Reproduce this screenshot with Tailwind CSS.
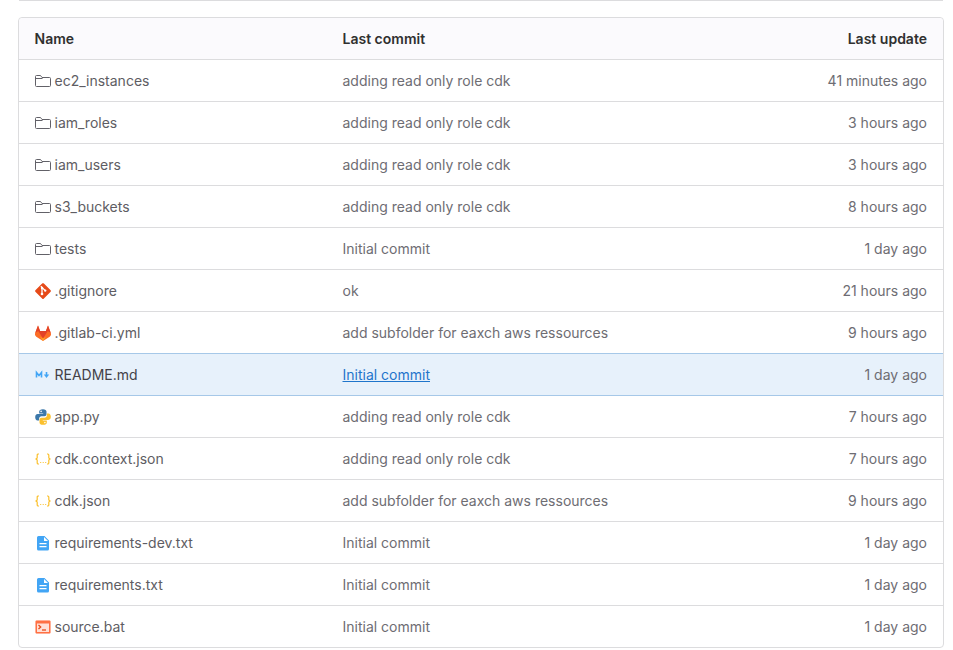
<!DOCTYPE html>
<html lang="en">
<head>
  <meta charset="UTF-8">
  <title>Repository files</title>
  <script src="https://cdn.jsdelivr.net/npm/@tailwindcss/browser@4"></script>
</head>
<body class="bg-white h-[650px] overflow-hidden font-['Inter',sans-serif] text-sm text-[#6e6d73]">

<!-- end of the block above the table -->
<div class="ml-[19px] mr-[10px] h-px bg-[#dcdcde]"></div>

<div class="mt-4 ml-[18px] mr-[9px] border border-[#dcdcde] rounded">
  <div class="grid grid-cols-[308px_1fr_200px] items-center h-[42px] pl-[15.5px] pr-4 bg-[#fbfafd] rounded-t font-semibold text-[#303030] border-b border-[#dcdcde]">
    <div>Name</div>
    <div>Last commit</div>
    <div class="text-right">Last update</div>
  </div>

  <div class="grid grid-cols-[308px_1fr_200px] items-center h-[42px] pl-[15.5px] pr-4 border-b border-[#dcdcde]">
    <div class="flex items-center gap-1 text-[#5e5d63]"><svg class="w-4 h-4" viewBox="0 0 16 16" fill="none" stroke="#626168"><path d="M.5 3.5a1 1 0 0 1 1-1h4l1.5 2h7.500a1 1 0 0 1 1 1v7a1 1 0 0 1-1 1h-13a1 1 0 0 1-1-1z"/><path d="M.5 5.500h7"/></svg>ec2_instances</div>
    <div>adding read only role cdk</div>
    <div class="text-right">41 minutes ago</div>
  </div>
  <div class="grid grid-cols-[308px_1fr_200px] items-center h-[42px] pl-[15.5px] pr-4 border-b border-[#dcdcde]">
    <div class="flex items-center gap-1 text-[#5e5d63]"><svg class="w-4 h-4" viewBox="0 0 16 16" fill="none" stroke="#626168"><path d="M.5 3.5a1 1 0 0 1 1-1h4l1.5 2h7.500a1 1 0 0 1 1 1v7a1 1 0 0 1-1 1h-13a1 1 0 0 1-1-1z"/><path d="M.5 5.500h7"/></svg>iam_roles</div>
    <div>adding read only role cdk</div>
    <div class="text-right">3 hours ago</div>
  </div>
  <div class="grid grid-cols-[308px_1fr_200px] items-center h-[42px] pl-[15.5px] pr-4 border-b border-[#dcdcde]">
    <div class="flex items-center gap-1 text-[#5e5d63]"><svg class="w-4 h-4" viewBox="0 0 16 16" fill="none" stroke="#626168"><path d="M.5 3.5a1 1 0 0 1 1-1h4l1.5 2h7.500a1 1 0 0 1 1 1v7a1 1 0 0 1-1 1h-13a1 1 0 0 1-1-1z"/><path d="M.5 5.500h7"/></svg>iam_users</div>
    <div>adding read only role cdk</div>
    <div class="text-right">3 hours ago</div>
  </div>
  <div class="grid grid-cols-[308px_1fr_200px] items-center h-[42px] pl-[15.5px] pr-4 border-b border-[#dcdcde]">
    <div class="flex items-center gap-1 text-[#5e5d63]"><svg class="w-4 h-4" viewBox="0 0 16 16" fill="none" stroke="#626168"><path d="M.5 3.5a1 1 0 0 1 1-1h4l1.5 2h7.500a1 1 0 0 1 1 1v7a1 1 0 0 1-1 1h-13a1 1 0 0 1-1-1z"/><path d="M.5 5.500h7"/></svg>s3_buckets</div>
    <div>adding read only role cdk</div>
    <div class="text-right">8 hours ago</div>
  </div>
  <div class="grid grid-cols-[308px_1fr_200px] items-center h-[42px] pl-[15.5px] pr-4 border-b border-[#dcdcde]">
    <div class="flex items-center gap-1 text-[#5e5d63]"><svg class="w-4 h-4" viewBox="0 0 16 16" fill="none" stroke="#626168"><path d="M.5 3.5a1 1 0 0 1 1-1h4l1.5 2h7.500a1 1 0 0 1 1 1v7a1 1 0 0 1-1 1h-13a1 1 0 0 1-1-1z"/><path d="M.5 5.500h7"/></svg>tests</div>
    <div>Initial commit</div>
    <div class="text-right">1 day ago</div>
  </div>

  <div class="grid grid-cols-[308px_1fr_200px] items-center h-[42px] pl-[15.5px] pr-4 border-b border-[#dcdcde]">
    <div class="flex items-center gap-1 text-[#5e5d63]"><svg class="w-4 h-4" viewBox="0 0 16 16"><path fill="#e64a19" d="M8 .2c.3 0 .6.1.9.4l6.500 6.500a1.200 1.200 0 0 1 0 1.800l-6.500 6.500a1.200 1.200 0 0 1-1.800 0L.6 8.900a1.200 1.200 0 0 1 0-1.800L7.100.6C7.400.3 7.700.2 8 .2z"/><path fill="none" stroke="#fff" stroke-width="1.300" d="M5.800 3.200l4.200 4.200M7 5v6"/><circle cx="7" cy="5" r="1.200" fill="#fff"/><circle cx="7" cy="11" r="1.300" fill="#fff"/><circle cx="10.200" cy="7.600" r="1.200" fill="#fff"/></svg>.gitignore</div>
    <div>ok</div>
    <div class="text-right">21 hours ago</div>
  </div>
  <div class="grid grid-cols-[308px_1fr_200px] items-center h-[42px] pl-[15.5px] pr-4 border-b border-[#dcdcde]">
    <div class="flex items-center gap-1 text-[#5e5d63]"><svg class="w-4 h-4" viewBox="0 0 16 16"><path fill="#fc6d26" d="M3 .5l2.100 5.600h5.800L13 .5l2.800 7.500a3.200 3.200 0 0 1-1.100 3.700L8 16l-6.700-4.300A3.200 3.200 0 0 1 .2 8z"/><path fill="#e24329" d="M3.200 6.100h9.600L8 13.500z"/><path fill="#e24329" d="M3 .5l2.100 5.600H3.200L.2 8zM13 .5l-2.100 5.600h1.900L15.800 8z"/><path fill="#fca326" d="M4.800 11.500L8 13.500l3.200-2L8 16z"/></svg>.gitlab-ci.yml</div>
    <div>add subfolder for eaxch aws ressources</div>
    <div class="text-right">9 hours ago</div>
  </div>

  <div class="grid grid-cols-[308px_1fr_200px] items-center h-[43px] -mt-px pl-[15.5px] pr-4 bg-[#e7f1fb] border-y border-[#a6c8e8]">
    <div class="flex items-center gap-1 text-[#434248]"><svg class="w-4 h-4" viewBox="0 0 16 16" fill="none" stroke="#42a5f5" stroke-width="1.600"><path d="M1.500 10.500v-5l2.500 3 2.500-3v5"/><path d="M11.500 5v3"/><path fill="#42a5f5" stroke="none" d="M8.800 7.500h5.400L11.500 11z"/></svg>README.md</div>
    <div><a class="text-[#1f75cb] underline" href="#">Initial commit</a></div>
    <div class="text-right">1 day ago</div>
  </div>

  <div class="grid grid-cols-[308px_1fr_200px] items-center h-[42px] pl-[15.5px] pr-4 border-b border-[#dcdcde]">
    <div class="flex items-center gap-1 text-[#5e5d63]"><svg class="w-4 h-4" viewBox="0 0 16 16"><path fill="#3c78aa" d="M8 .2C5.300.2 4.200 1.200 4.200 2.600v1.900H8.200V5.100H2.700C1 5.100.2 6.400.2 8.200s.9 3.400 2.300 3.400h1.600V9.700c0-1.300 1.100-2.400 2.400-2.400h3c1.100 0 2-.9 2-2V2.600C11.500 1.200 10.200.2 8 .2z"/><path fill="#fbc02d" d="M8 15.800c2.700 0 3.800-1 3.800-2.400v-1.900H7.800v-.6h5.500c1.700 0 2.500-1.300 2.500-3.100s-.9-3.400-2.300-3.400h-1.600v1.900c0 1.300-1.100 2.400-2.400 2.400h-3c-1.100 0-2 .9-2 2v2.700c0 1.400 1.300 2.400 3.500 2.400z"/><circle cx="6.100" cy="2.400" r=".8" fill="#fff"/><circle cx="9.900" cy="13.600" r=".8" fill="#fff"/></svg>app.py</div>
    <div>adding read only role cdk</div>
    <div class="text-right">7 hours ago</div>
  </div>
  <div class="grid grid-cols-[308px_1fr_200px] items-center h-[42px] pl-[15.5px] pr-4 border-b border-[#dcdcde]">
    <div class="flex items-center gap-1 text-[#5e5d63]"><svg class="w-4 h-4" viewBox="0 0 16 16" fill="none" stroke="#fbc02d" stroke-width="1.200"><path d="M4 3H3.200a1 1 0 0 0-1 1v3L1 8l1.200 1v3a1 1 0 0 0 1 1H4M12 3h.8a1 1 0 0 1 1 1v3L15 8l-1.200 1v3a1 1 0 0 1-1 1H12"/><path stroke-dasharray="1 1.500" d="M5.200 11.500h6"/></svg>cdk.context.json</div>
    <div>adding read only role cdk</div>
    <div class="text-right">7 hours ago</div>
  </div>
  <div class="grid grid-cols-[308px_1fr_200px] items-center h-[42px] pl-[15.5px] pr-4 border-b border-[#dcdcde]">
    <div class="flex items-center gap-1 text-[#5e5d63]"><svg class="w-4 h-4" viewBox="0 0 16 16" fill="none" stroke="#fbc02d" stroke-width="1.200"><path d="M4 3H3.200a1 1 0 0 0-1 1v3L1 8l1.200 1v3a1 1 0 0 0 1 1H4M12 3h.8a1 1 0 0 1 1 1v3L15 8l-1.200 1v3a1 1 0 0 1-1 1H12"/><path stroke-dasharray="1 1.500" d="M5.200 11.500h6"/></svg>cdk.json</div>
    <div>add subfolder for eaxch aws ressources</div>
    <div class="text-right">9 hours ago</div>
  </div>
  <div class="grid grid-cols-[308px_1fr_200px] items-center h-[42px] pl-[15.5px] pr-4 border-b border-[#dcdcde]">
    <div class="flex items-center gap-1 text-[#5e5d63]"><svg class="w-4 h-4" viewBox="0 0 16 16"><path fill="#42a5f5" d="M3.500 1h6L14 5.500V14a1.500 1.500 0 0 1-1.500 1.500h-9A1.500 1.500 0 0 1 2 14V2.500A1.500 1.500 0 0 1 3.500 1z"/><path fill="#fff" d="M9 2v4h4zM4.500 8h7v1.200h-7zM4.500 11h7v1.200h-7z"/></svg>requirements-dev.txt</div>
    <div>Initial commit</div>
    <div class="text-right">1 day ago</div>
  </div>
  <div class="grid grid-cols-[308px_1fr_200px] items-center h-[42px] pl-[15.5px] pr-4 border-b border-[#dcdcde]">
    <div class="flex items-center gap-1 text-[#5e5d63]"><svg class="w-4 h-4" viewBox="0 0 16 16"><path fill="#42a5f5" d="M3.500 1h6L14 5.500V14a1.500 1.500 0 0 1-1.500 1.500h-9A1.500 1.500 0 0 1 2 14V2.500A1.500 1.500 0 0 1 3.500 1z"/><path fill="#fff" d="M9 2v4h4zM4.500 8h7v1.200h-7zM4.500 11h7v1.200h-7z"/></svg>requirements.txt</div>
    <div>Initial commit</div>
    <div class="text-right">1 day ago</div>
  </div>
  <div class="grid grid-cols-[308px_1fr_200px] items-center h-[41px] pl-[15.5px] pr-4">
    <div class="flex items-center gap-1 text-[#5e5d63]"><svg class="w-4 h-4" viewBox="0 0 16 16"><rect x=".5" y="1.500" width="15" height="13" rx="1" fill="#ffe0d6"/><path fill="#ff7043" fill-rule="evenodd" d="M1.500 1.500h13a1 1 0 0 1 1 1v11a1 1 0 0 1-1 1h-13a1 1 0 0 1-1-1v-11a1 1 0 0 1 1-1zM2 4.500V13h12V4.500z"/><path fill="none" stroke="#e64a19" stroke-width="1.300" d="M3.500 6l2.200 2-2.200 2"/><path stroke="#e64a19" stroke-width="1.300" d="M7 11h4"/></svg>source.bat</div>
    <div>Initial commit</div>
    <div class="text-right">1 day ago</div>
  </div>
</div>

</body>
</html>
